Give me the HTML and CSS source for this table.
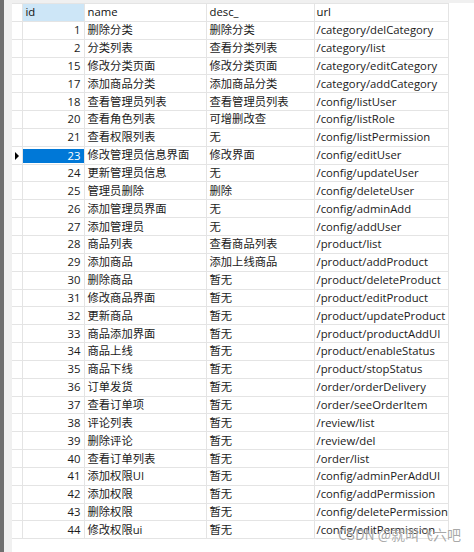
FILE: index.html
```html
<!DOCTYPE html>
<html lang="zh">
<head>
<meta charset="utf-8">
<link rel="stylesheet" href="styles.css">
</head>
<body>
<div class="app">
  <div class="edge"></div>
  <div class="gutter"></div>
  <div class="main">
    <div class="topstrip"></div>
    <table class="grid">
      <colgroup>
        <col class="c-ind"><col class="c-id"><col class="c-name"><col class="c-desc"><col class="c-url"><col class="c-rest">
      </colgroup>
      <thead>
        <tr><th class="ind"></th><th class="hid">id</th><th>name</th><th>desc_</th><th class="u">url</th><th class="rest"></th></tr>
      </thead>
      <tbody>
        <tr><td class="ind"></td><td class="num">1</td><td>删除分类</td><td>删除分类</td><td class="u">/category/delCategory</td><td class="rest"></td></tr>
        <tr><td class="ind"></td><td class="num">2</td><td>分类列表</td><td>查看分类列表</td><td class="u">/category/list</td><td class="rest"></td></tr>
        <tr><td class="ind"></td><td class="num">15</td><td>修改分类页面</td><td>修改分类页面</td><td class="u">/category/editCategory</td><td class="rest"></td></tr>
        <tr><td class="ind"></td><td class="num">17</td><td>添加商品分类</td><td>添加商品分类</td><td class="u">/category/addCategory</td><td class="rest"></td></tr>
        <tr><td class="ind"></td><td class="num">18</td><td>查看管理员列表</td><td>查看管理员列表</td><td class="u">/config/listUser</td><td class="rest"></td></tr>
        <tr><td class="ind"></td><td class="num">20</td><td>查看角色列表</td><td>可增删改查</td><td class="u">/config/listRole</td><td class="rest"></td></tr>
        <tr><td class="ind"></td><td class="num">21</td><td>查看权限列表</td><td>无</td><td class="u">/config/listPermission</td><td class="rest"></td></tr>
        <tr class="cur"><td class="ind"><span class="arrow"></span></td><td class="num sel"><span>23</span></td><td>修改管理员信息界面</td><td>修改界面</td><td class="u">/config/editUser</td><td class="rest"></td></tr>
        <tr><td class="ind"></td><td class="num">24</td><td>更新管理员信息</td><td>无</td><td class="u">/config/updateUser</td><td class="rest"></td></tr>
        <tr><td class="ind"></td><td class="num">25</td><td>管理员删除</td><td>删除</td><td class="u">/config/deleteUser</td><td class="rest"></td></tr>
        <tr><td class="ind"></td><td class="num">26</td><td>添加管理员界面</td><td>无</td><td class="u">/config/adminAdd</td><td class="rest"></td></tr>
        <tr><td class="ind"></td><td class="num">27</td><td>添加管理员</td><td>无</td><td class="u">/config/addUser</td><td class="rest"></td></tr>
        <tr><td class="ind"></td><td class="num">28</td><td>商品列表</td><td>查看商品列表</td><td class="u">/product/list</td><td class="rest"></td></tr>
        <tr><td class="ind"></td><td class="num">29</td><td>添加商品</td><td>添加上线商品</td><td class="u">/product/addProduct</td><td class="rest"></td></tr>
        <tr><td class="ind"></td><td class="num">30</td><td>删除商品</td><td>暂无</td><td class="u">/product/deleteProduct</td><td class="rest"></td></tr>
        <tr><td class="ind"></td><td class="num">31</td><td>修改商品界面</td><td>暂无</td><td class="u">/product/editProduct</td><td class="rest"></td></tr>
        <tr><td class="ind"></td><td class="num">32</td><td>更新商品</td><td>暂无</td><td class="u">/product/updateProduct</td><td class="rest"></td></tr>
        <tr><td class="ind"></td><td class="num">33</td><td>商品添加界面</td><td>暂无</td><td class="u">/product/productAddUI</td><td class="rest"></td></tr>
        <tr><td class="ind"></td><td class="num">34</td><td>商品上线</td><td>暂无</td><td class="u">/product/enableStatus</td><td class="rest"></td></tr>
        <tr><td class="ind"></td><td class="num">35</td><td>商品下线</td><td>暂无</td><td class="u">/product/stopStatus</td><td class="rest"></td></tr>
        <tr><td class="ind"></td><td class="num">36</td><td>订单发货</td><td>暂无</td><td class="u">/order/orderDelivery</td><td class="rest"></td></tr>
        <tr><td class="ind"></td><td class="num">37</td><td>查看订单项</td><td>暂无</td><td class="u">/order/seeOrderItem</td><td class="rest"></td></tr>
        <tr><td class="ind"></td><td class="num">38</td><td>评论列表</td><td>暂无</td><td class="u">/review/list</td><td class="rest"></td></tr>
        <tr><td class="ind"></td><td class="num">39</td><td>删除评论</td><td>暂无</td><td class="u">/review/del</td><td class="rest"></td></tr>
        <tr><td class="ind"></td><td class="num">40</td><td>查看订单列表</td><td>暂无</td><td class="u">/order/list</td><td class="rest"></td></tr>
        <tr><td class="ind"></td><td class="num">41</td><td>添加权限UI</td><td>暂无</td><td class="u">/config/adminPerAddUI</td><td class="rest"></td></tr>
        <tr><td class="ind"></td><td class="num">42</td><td>添加权限</td><td>暂无</td><td class="u">/config/addPermission</td><td class="rest"></td></tr>
        <tr><td class="ind"></td><td class="num">43</td><td>删除权限</td><td>暂无</td><td class="u">/config/deletePermission</td><td class="rest"></td></tr>
        <tr><td class="ind"></td><td class="num">44</td><td>修改权限ui</td><td>暂无</td><td class="u">/config/editPermission</td><td class="rest"></td></tr>
      </tbody>
    </table>
  </div>
</div>
<div class="watermark">CSDN @就叫飞六吧</div>
</body>
</html>
```

FILE: styles.css
```css
html, body {
  margin: 0;
  padding: 0;
  background: #ffffff;
}
body {
  width: 474px;
  height: 552px;
  overflow: hidden;
  position: relative;
  font-family: "Open Sans", "Noto Sans CJK SC", sans-serif;
  font-size: 11.3px;
  color: #1a1a1a;
}
.app {
  display: flex;
  height: 552px;
}
.edge {
  width: 4px;
  background: #6f6f6f;
  flex: none;
}
.gutter {
  width: 8px;
  background: #f0f0f0;
  flex: none;
}
.main {
  flex: 1;
  display: flex;
  flex-direction: column;
}
.topstrip {
  height: 3px;
  background: #f0f0f0;
  flex: none;
}
.grid {
  border-collapse: collapse;
  table-layout: fixed;
  width: 462px;
}
.c-ind { width: 10px; }
.c-id { width: 62px; }
.c-name { width: 122px; }
.c-desc { width: 108px; }
.c-url { width: 134px; }
.c-rest { width: 26px; }
.grid th, .grid td {
  height: 17.85px;
  padding: 0 0 0 3px;
  border: 1px solid #e4e4e4;
  text-align: left;
  font-weight: normal;
  white-space: nowrap;
  overflow: visible;
  line-height: 16px;
  box-sizing: border-box;
}
.grid th.u, .grid td.u {
  padding-left: 2px;
}
.grid th {
  color: #111;
}
.grid th.hid {
  background: #cde6f7;
}
.grid .ind {
  padding: 0;
  border-left: none;
  position: relative;
}
.grid .rest {
  border: none;
  border-left: 1px solid #e4e4e4;
}
.grid td.num {
  text-align: right;
  padding: 0 3px 0 0;
}
.grid td.sel {
  padding: 0;
}
.grid td.sel span {
  display: block;
  background: #0078d7;
  color: #fff;
  margin-top: 2px;
  height: 14px;
  line-height: 14px;
  padding-right: 3px;
}
.arrow {
  position: absolute;
  left: 3px;
  top: 5px;
  width: 0;
  height: 0;
  border-top: 4px solid transparent;
  border-bottom: 4px solid transparent;
  border-left: 4px solid #000;
}
.watermark {
  position: absolute;
  left: 338px;
  top: 524px;
  font-family: "Noto Sans CJK SC", sans-serif;
  font-size: 14px;
  color: rgba(140, 140, 140, 0.75);
  text-shadow: 0 0 1px rgba(255,255,255,0.8);
  white-space: nowrap;
}
```
